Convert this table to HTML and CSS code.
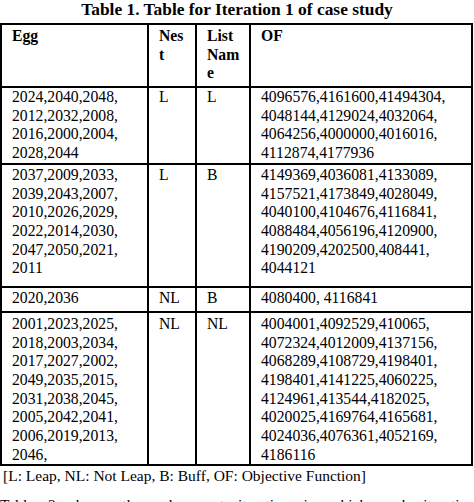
FILE: index.html
```html
<!DOCTYPE html>
<html lang="en">
<head>
<meta charset="utf-8">
<title>Table 1</title>
<link rel="stylesheet" href="styles.css">
</head>
<body>
<div class="page">
  <h1 class="caption">Table 1. Table for Iteration 1 of case study</h1>
  <table class="data">
    <thead>
      <tr class="row-head">
        <th class="c-egg">Egg</th>
        <th class="c-nest">Nes<br>t</th>
        <th class="c-list">List<br>Nam<br>e</th>
        <th class="c-of">OF</th>
      </tr>
    </thead>
    <tbody>
      <tr class="row-1">
        <td>2024,2040,2048,<br>2012,2032,2008,<br>2016,2000,2004,<br>2028,2044</td>
        <td>L</td>
        <td>L</td>
        <td>4096576,4161600,41494304,<br>4048144,4129024,4032064,<br>4064256,4000000,4016016,<br>4112874,4177936</td>
      </tr>
      <tr class="row-2">
        <td>2037,2009,2033,<br>2039,2043,2007,<br>2010,2026,2029,<br>2022,2014,2030,<br>2047,2050,2021,<br>2011</td>
        <td>L</td>
        <td>B</td>
        <td>4149369,4036081,4133089,<br>4157521,4173849,4028049,<br>4040100,4104676,4116841,<br>4088484,4056196,4120900,<br>4190209,4202500,408441,<br>4044121</td>
      </tr>
      <tr class="row-3">
        <td>2020,2036</td>
        <td>NL</td>
        <td>B</td>
        <td>4080400, 4116841</td>
      </tr>
      <tr class="row-4">
        <td>2001,2023,2025,<br>2018,2003,2034,<br>2017,2027,2002,<br>2049,2035,2015,<br>2031,2038,2045,<br>2005,2042,2041,<br>2006,2019,2013,<br>2046,</td>
        <td>NL</td>
        <td>NL</td>
        <td>4004001,4092529,410065,<br>4072324,4012009,4137156,<br>4068289,4108729,4198401,<br>4198401,4141225,4060225,<br>4124961,413544,4182025,<br>4020025,4169764,4165681,<br>4024036,4076361,4052169,<br>4186116</td>
      </tr>
    </tbody>
  </table>
  <p class="legend">[L: Leap, NL: Not Leap, B: Buff, OF: Objective Function]</p>
  <p class="body-text">Table 2 shows the subsequent iteration in which each iteration is</p>
</div>
</body>
</html>
```
FILE: styles.css
```css
* {
  box-sizing: border-box;
}

html, body {
  margin: 0;
  padding: 0;
  background: #ffffff;
}

body {
  width: 474px;
  height: 502px;
  overflow: hidden;
  font-family: "Liberation Serif", "Times New Roman", serif;
  color: #000;
}

.page {
  display: flex;
  flex-direction: column;
}

.caption {
  margin: 0;
  padding: 0 0 4px 0;
  font-size: 17.4px;
  line-height: 19px;
  font-weight: bold;
  text-align: center;
}

.data {
  width: 473px;
  table-layout: fixed;
  border-collapse: separate;
  border-spacing: 0;
  border-top: 2px solid #000;
  border-left: 2px solid #000;
  font-size: 15.7px;
  line-height: 18.7px;
}

.data th,
.data td {
  border-right: 2px solid #000;
  border-bottom: 2px solid #000;
  padding: 0 2px 0 10px;
  vertical-align: top;
  text-align: left;
  white-space: nowrap;
}

.data th {
  font-weight: bold;
  padding-top: 2px;
}

.c-egg { width: 147px; }
.c-nest { width: 48px; }
.c-list { width: 54px; }
.c-of { width: 222px; }

.row-head th { height: 63px; }
.row-1 td { height: 74px; padding-top: 0; }
.row-2 td { height: 123px; padding-top: 1px; }
.row-3 td { height: 25px; padding-top: 1px; }
.row-4 td { height: 153px; padding-top: 2px; }

.legend {
  margin: 0;
  padding-left: 3px;
  font-size: 15.5px;
  line-height: 19px;
}

.body-text {
  margin: 10px 0 0 0;
  font-size: 15.5px;
  line-height: 19px;
  white-space: nowrap;
  word-spacing: 10px;
}
```
